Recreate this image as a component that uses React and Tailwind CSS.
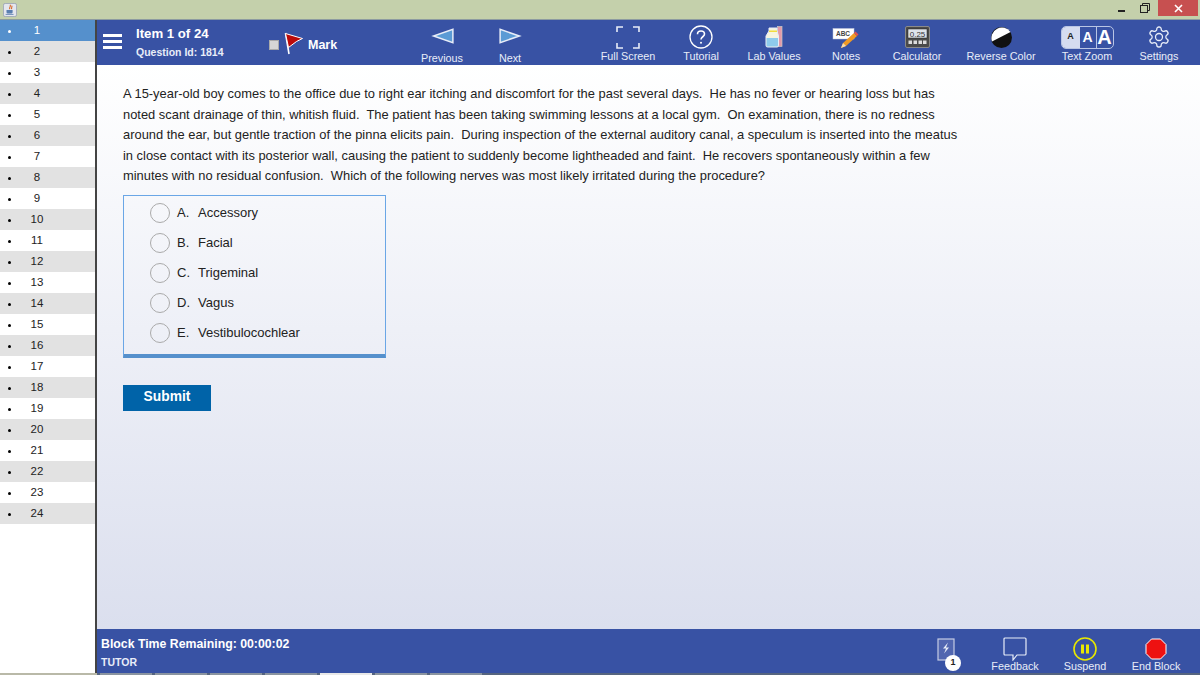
import { Fragment } from "react";

const rows = Array.from({ length: 24 }, (_, i) => i + 1);
const tabs = [0, 1, 2, 3, 4, 5, 6];

const questionLines = [
  "A 15-year-old boy comes to the office due to right ear itching and discomfort for the past several days.  He has no fever or hearing loss but has",
  "noted scant drainage of thin, whitish fluid.  The patient has been taking swimming lessons at a local gym.  On examination, there is no redness",
  "around the ear, but gentle traction of the pinna elicits pain.  During inspection of the external auditory canal, a speculum is inserted into the meatus",
  "in close contact with its posterior wall, causing the patient to suddenly become lightheaded and faint.  He recovers spontaneously within a few",
  "minutes with no residual confusion.  Which of the following nerves was most likely irritated during the procedure?",
];

const options = [
  ["A.", "Accessory"],
  ["B.", "Facial"],
  ["C.", "Trigeminal"],
  ["D.", "Vagus"],
  ["E.", "Vestibulocochlear"],
];

function JavaIcon() {
  return (
    <svg width="14" height="14" viewBox="0 0 16 16">
      <rect x="0.5" y="0.5" width="15" height="15" rx="2" fill="#e4e6ee" stroke="#9aa3b5" />
      <path d="M8 2c2 2-2 3 0 5M10 3c1 2-1 2 0 4" stroke="#d8641c" strokeWidth="1.2" fill="none" />
      <path d="M4 8h7v2.5c0 1-1 1.5-2 1.5H6c-1 0-2-.5-2-1.5z" fill="#5a7fb0" />
      <path d="M3 13h9" stroke="#5a7fb0" />
    </svg>
  );
}

function ToolButton({ label, width, children }) {
  return (
    <div className={`flex flex-col items-center shrink-0 ${width}`}>
      <div className="h-6 flex items-center justify-center">{children}</div>
      <span className="text-[10.8px] leading-[14px] text-[#e8edf8] whitespace-nowrap">{label}</span>
    </div>
  );
}

function FooterButton({ label, width, children }) {
  return (
    <div className={`flex flex-col items-center shrink-0 ${width}`}>
      <div className="h-[21px] flex items-center justify-center">{children}</div>
      <span className="text-[10.8px] leading-[14px] text-[#e8edf8] whitespace-nowrap">{label}</span>
    </div>
  );
}

export default function App() {
  return (
    <div className="w-[1200px] h-[675px] overflow-hidden flex flex-col bg-white font-['Liberation_Sans',Arial,sans-serif]">
      {/* window title bar */}
      <div className="h-5 shrink-0 bg-[#c4d0ab] flex items-center justify-between border-b border-[#8d9ba0]">
        <div className="pl-[3px] pt-[1px]"><JavaIcon /></div>
        <div className="flex items-start h-full">
          <div className="w-[7px] h-[2px] mt-[10px] mr-[15px] bg-[#222]" />
          <svg className="mt-[3px] mr-[8px]" width="10" height="10" viewBox="0 0 10 10" fill="none" stroke="#222">
            <rect x="0.5" y="2.5" width="7" height="7" strokeWidth="1" />
            <path d="M2.5 2.5V.5h7v7H7.5" strokeWidth="1" />
          </svg>
          <div className="w-10 h-4 mr-[2px] bg-[#c75050] flex items-center justify-center">
            <svg width="9" height="9" viewBox="0 0 9 9" stroke="#fff" strokeWidth="1.6"><path d="M1 1l7 7M8 1l-7 7" /></svg>
          </div>
        </div>
      </div>

      <div className="flex-1 min-h-0 flex">
        {/* item list */}
        <div className="w-[97px] shrink-0 border-r-2 border-[#444] bg-white">
          {rows.map((n) => (
            <div
              key={n}
              className={`h-[21px] flex items-center pt-[1px] text-[11.5px] ${n === 1 ? "bg-[#5590cc] text-white" : n % 2 === 0 ? "bg-[#e2e2e2] text-[#222]" : "bg-white text-[#222]"}`}
            >
              <span className={`ml-[8px] w-[3px] h-[3px] rounded-full ${n === 1 ? "bg-white" : "bg-black"}`} />
              <span className="ml-[19px] w-[14px] text-center">{n}</span>
            </div>
          ))}
        </div>

        <div className="flex-1 min-w-0 flex flex-col">
          {/* top toolbar */}
          <div className="h-[45px] shrink-0 bg-[#3852a4] flex text-white">
            <div className="w-[39px] shrink-0 pl-[6px] pt-[14px]">
              <div className="w-[19px] flex flex-col gap-[3px]">
                <div className="h-[3px] bg-white" />
                <div className="h-[3px] bg-white" />
                <div className="h-[3px] bg-white" />
              </div>
            </div>
            <div className="w-[133px] shrink-0 pt-[6px]">
              <div className="text-[13.2px] leading-[16px] font-bold">Item 1 of 24</div>
              <div className="text-[10.5px] leading-[14px] font-bold mt-[3px] text-[#e8edf8]">Question Id: 1814</div>
            </div>
            <div className="w-[139px] shrink-0 flex items-start pt-[12px]">
              <div className="w-[10px] h-[10px] mt-[8px] bg-[#d6d6d6] border border-[#aaa]" />
              <svg className="ml-[5px]" width="20" height="23" viewBox="0 0 20 23">
                <path d="M1.500 1L5 22" stroke="#fff" strokeWidth="1.6" fill="none" />
                <path d="M1.500 1.500l17 5-6 3-8 6z" fill="#bb0a0a" stroke="#fff" strokeWidth="1" />
              </svg>
              <span className="ml-[4px] mt-[6px] text-[12.5px] leading-[14px] font-bold">Mark</span>
            </div>
            <div className="flex shrink-0 pt-[7px]">
              <div className="w-[68px] flex flex-col items-center">
                <svg width="24" height="17" viewBox="0 0 24 17" className="mt-[1px] ml-[2px]"><path d="M22.500 1.500v14L2 8.500z" fill="#5b9bd5" stroke="#e8edf8" strokeWidth="1.600" /></svg>
                <span className="text-[10.8px] leading-[14px] mt-[7px] text-[#e8edf8]">Previous</span>
              </div>
              <div className="w-[68px] flex flex-col items-center">
                <svg width="24" height="17" viewBox="0 0 24 17" className="mt-[1px]"><path d="M1.500 1.500v14L22 8.500z" fill="#5b9bd5" stroke="#e8edf8" strokeWidth="1.600" /></svg>
                <span className="text-[10.8px] leading-[14px] mt-[7px] text-[#e8edf8]">Next</span>
              </div>
            </div>
            <div className="w-[46px] shrink-0" />
            <div className="flex shrink-0 pt-[5px]">
              <ToolButton label="Full Screen" width="w-[76px]">
                <svg width="24" height="23" viewBox="0 0 24 23" fill="none" stroke="#e8edf8" strokeWidth="1.600">
                  <path d="M1 6V1h6M17 1h6v5M1 17v5h6M17 22h6v-5" />
                </svg>
              </ToolButton>
              <ToolButton label="Tutorial" width="w-[70px]">
                <svg width="24" height="24" viewBox="0 0 24 24" fill="none" stroke="#fff" strokeWidth="1.300">
                  <circle cx="12" cy="12" r="11" />
                  <path d="M8.500 9.200c0-2 1.600-3.200 3.500-3.200s3.500 1.200 3.500 3c0 2.800-3.500 2.700-3.500 5.500" strokeWidth="1.600" />
                  <circle cx="12" cy="17.800" r="1" fill="#fff" stroke="none" />
                </svg>
              </ToolButton>
              <ToolButton label="Lab Values" width="w-[76px]">
                <svg width="18" height="22" viewBox="0 0 18 22">
                  <rect x="12.500" y="0.500" width="4.500" height="20" fill="#e39aa8" stroke="#c8c8c8" strokeWidth="0.700" />
                  <path d="M4 2h8v3l1.500 5v9.500a1.500 1.500 0 0 1-1.500 1.500H2.500A1.500 1.500 0 0 1 1 19.500V10l3-5z" fill="#f6f4df" stroke="#e8edf8" />
                  <path d="M1.500 12h11.500v7.500a1 1 0 0 1-1 1H2.500a1 1 0 0 1-1-1z" fill="#8ecbec" />
                  <rect x="4" y="4.500" width="8" height="1.500" fill="#f2dc3c" />
                </svg>
              </ToolButton>
              <ToolButton label="Notes" width="w-[68px]">
                <svg width="28" height="21" viewBox="0 0 28 21" className="mt-[2px]">
                  <rect x="1" y="0.500" width="21" height="10.500" fill="#fff" stroke="#bfc6dc" strokeWidth="0.500" />
                  <text x="11" y="7.500" fontSize="6.500" fontWeight="700" textAnchor="middle" fill="#444" fontFamily="Liberation Sans">ABC</text>
                  <path d="M9 20l2-5L22 5l3 3-11 10z" fill="#f09a24" />
                  <path d="M22 5l1.500-1.500 3 3L25 8z" fill="#e2514c" />
                  <path d="M9 20l2-5 3 3z" fill="#f6dcb0" />
                </svg>
              </ToolButton>
              <ToolButton label="Calculator" width="w-[74px]">
                <svg width="25" height="22" viewBox="0 0 25 22">
                  <rect x="0.500" y="0.500" width="24" height="21" rx="1.500" fill="#4a4a4a" stroke="#8a8a8a" />
                  <rect x="3" y="3" width="19" height="9" fill="#dfe3ea" stroke="#222" strokeWidth="0.500" />
                  <text x="12.500" y="10.500" fontSize="8" textAnchor="middle" fill="#333" fontFamily="Liberation Sans">0.25</text>
                  <rect x="3.500" y="14.500" width="3.500" height="3.500" fill="#ddd" />
                  <rect x="8.500" y="14.500" width="3.500" height="3.500" fill="#ddd" />
                  <rect x="13.500" y="14.500" width="3.500" height="3.500" fill="#ddd" />
                  <rect x="18" y="14.500" width="3.500" height="3.500" fill="#ddd" />
                </svg>
              </ToolButton>
              <ToolButton label="Reverse Color" width="w-[94px]">
                <svg width="21" height="21" viewBox="0 0 21 21">
                  <circle cx="10.500" cy="10.500" r="10.500" fill="#111" />
                  <path d="M1 14.500A10.500 10.500 0 0 1 19.500 5z" fill="#fff" />
                </svg>
              </ToolButton>
              <ToolButton label="Text Zoom" width="w-[78px]">
                <div className="flex h-[23px] w-[53px] border border-[#b9c5e4] rounded-[5px] overflow-hidden font-bold text-white">
                  <div className="w-[18px] bg-[#d5dcf0] text-[#222] text-[9px] flex items-center justify-center">A</div>
                  <div className="w-[17px] border-r border-[#b9c5e4] text-[14px] flex items-center justify-center">A</div>
                  <div className="flex-1 text-[20px] flex items-center justify-center">A</div>
                </div>
              </ToolButton>
              <ToolButton label="Settings" width="w-[66px]">
                <svg width="24" height="24" viewBox="0 0 24 24" fill="none" stroke="#e8edf8" strokeWidth="1.300" strokeLinecap="round" strokeLinejoin="round">
                  <path d="M12.220 2h-.44a2 2 0 0 0-2 2v.18a2 2 0 0 1-1 1.730l-.43.25a2 2 0 0 1-2 0l-.15-.08a2 2 0 0 0-2.730.73l-.22.38a2 2 0 0 0 .73 2.730l.15.1a2 2 0 0 1 1 1.720v.51a2 2 0 0 1-1 1.740l-.15.09a2 2 0 0 0-.73 2.730l.22.38a2 2 0 0 0 2.730.73l.15-.08a2 2 0 0 1 2 0l.43.25a2 2 0 0 1 1 1.730V20a2 2 0 0 0 2 2h.44a2 2 0 0 0 2-2v-.18a2 2 0 0 1 1-1.730l.43-.25a2 2 0 0 1 2 0l.15.08a2 2 0 0 0 2.730-.73l.22-.39a2 2 0 0 0-.73-2.730l-.15-.08a2 2 0 0 1-1-1.740v-.5a2 2 0 0 1 1-1.740l.15-.09a2 2 0 0 0 .73-2.730l-.22-.38a2 2 0 0 0-2.730-.73l-.15.08a2 2 0 0 1-2 0l-.43-.25a2 2 0 0 1-1-1.730V4a2 2 0 0 0-2-2z" />
                  <circle cx="12" cy="12" r="3.500" />
                </svg>
              </ToolButton>
            </div>
          </div>

          {/* question area */}
          <div className="flex-1 min-h-0 bg-gradient-to-b from-white to-[#dbdfee] pl-[26px] pt-[19px] text-[#222]">
            <div className="text-[12.9px] leading-[20.5px] whitespace-pre">
              {questionLines.map((line, i) => (
                <Fragment key={i}>
                  {line}
                  <br />
                </Fragment>
              ))}
            </div>
            <div className="mt-[8px] w-[263px] h-[163px] border border-[#6aa6e6] border-b-[4px] border-b-[#5590cc] pt-[2px] pl-[26px]">
              {options.map(([letter, text]) => (
                <div key={letter} className="h-[30px] flex items-center text-[13px]">
                  <div className="w-5 h-5 rounded-full border-[1.5px] border-[#aaaaaa] shrink-0" />
                  <span className="ml-[7px] w-[21px]">{letter}</span>
                  <span>{text}</span>
                </div>
              ))}
            </div>
            <button className="mt-[27px] w-[88px] h-[26px] bg-[#0063a8] text-white text-[13.8px] font-bold flex items-center justify-center">
              Submit
            </button>
          </div>

          {/* bottom toolbar */}
          <div className="h-11 shrink-0 bg-[#3852a4] flex justify-between text-white">
            <div className="pl-[4px] pt-[7px]">
              <div className="text-[12.3px] leading-[16px] font-bold">Block Time Remaining: 00:00:02</div>
              <div className="text-[10.5px] leading-[14px] font-bold mt-[3px] text-[#e8edf8]">TUTOR</div>
            </div>
            <div className="flex pt-[9px] pr-[5px]">
              <div className="w-[40px] relative">
                <svg width="18" height="23" viewBox="0 0 18 23">
                  <rect x="1" y="1" width="16" height="21" fill="#5166b0" stroke="#c5cce4" strokeWidth="1.200" />
                  <path d="M11 4.500l-5 6h3l-2 5 5-6H9z" fill="#e8edf8" />
                </svg>
                <span className="absolute left-[8px] top-[17px] w-4 h-4 rounded-full bg-white text-[#222] text-[9px] font-bold flex items-center justify-center">1</span>
              </div>
              <FooterButton label="Feedback" width="w-[76px]">
                <svg width="24" height="24" viewBox="0 0 24 24" fill="none" stroke="#e8edf8" strokeWidth="1.200">
                  <path d="M2 1h20a1 1 0 0 1 1 1v15a1 1 0 0 1-1 1h-8l-4 5v-5H2a1 1 0 0 1-1-1V2a1 1 0 0 1 1-1z" />
                </svg>
              </FooterButton>
              <FooterButton label="Suspend" width="w-16">
                <svg width="24" height="24" viewBox="0 0 24 24">
                  <circle cx="12" cy="12" r="11" fill="#3852a4" stroke="#e8e800" strokeWidth="1.600" />
                  <rect x="8" y="7.500" width="3" height="9" fill="#e8e800" />
                  <rect x="13" y="7.500" width="3" height="9" fill="#e8e800" />
                </svg>
              </FooterButton>
              <FooterButton label="End Block" width="w-[78px]">
                <svg width="22" height="22" viewBox="0 0 22 22">
                  <path d="M6.500 1h9L21 6.500v9L15.500 21h-9L1 15.500v-9z" fill="#ee1111" stroke="#fff" strokeWidth="1" />
                </svg>
              </FooterButton>
            </div>
          </div>
        </div>
      </div>

      {/* desktop tabs peeking out below the window */}
      <div className="h-[2px] shrink-0 flex bg-[#55647f]">
        <div className="w-[97px] bg-[#b9b9a8]" />
        <div className="flex gap-[3px] pl-[3px]">
          {tabs.map((t) => (
            <div key={t} className={`w-[52px] h-[2px] ${t === 4 ? "bg-[#e8e8e8]" : "bg-[#8a94a0]"}`} />
          ))}
        </div>
      </div>
    </div>
  );
}
